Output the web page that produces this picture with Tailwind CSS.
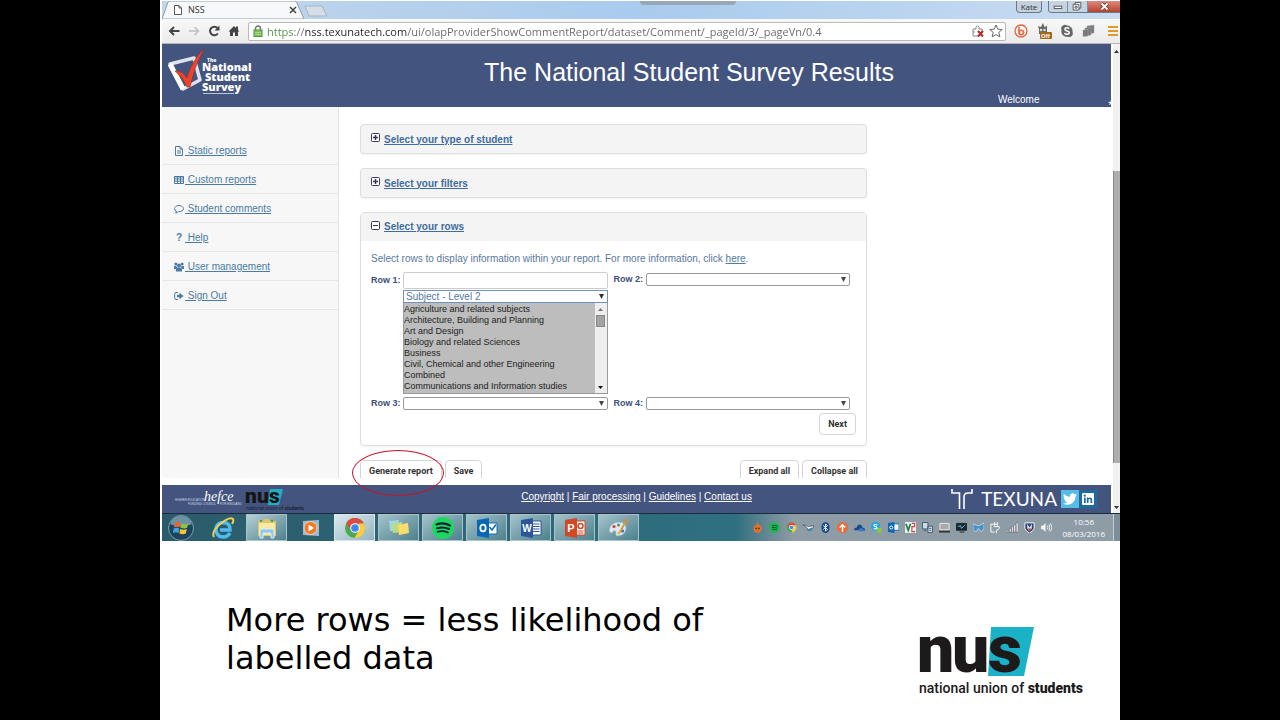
<!DOCTYPE html>
<html lang="en">
<head>
    <meta charset="UTF-8">
    <meta name="viewport" content="width=device-width, initial-scale=1.0">
    <title>The National Student Survey Results</title>
    <script src="https://cdn.jsdelivr.net/npm/@tailwindcss/browser@4"></script>
</head>
<body class="bg-black font-['Liberation_Sans',Arial,sans-serif] text-[10px] leading-3">

<!-- Slide -->
<main class="mx-auto flex min-h-screen w-3/4 flex-col bg-white pt-px">

    <!-- Browser window -->
    <section class="ml-0.5">

        <!-- Tab strip -->
        <div class="flex h-[18px] items-start justify-between bg-linear-to-r from-[#c3d6ea] via-[#a9cbee] to-[#c9dcf0] font-['Open_Sans',sans-serif]">
            <div class="flex h-full">
                <div class="relative flex h-full w-[142px] items-center gap-1.5 pl-3">
                    <svg class="absolute inset-0 h-full w-full" viewBox="0 0 142 18" preserveAspectRatio="none"><path d="M0 18 L6 1 Q7 0 9 0 H132 Q134 0 135 2 L142 18Z" fill="#f7f8f9" stroke="#8b9db2"/></svg>
                    <svg class="relative h-2.5 w-2" viewBox="0 0 8 10" fill="#fff" stroke="#555"><path d="M.5 .5H5L7.5 3V9.500H.5ZM5 .5V3H7.500"/></svg>
                    <span class="relative flex-1 text-[9px] text-[#333]">NSS</span>
                    <button class="relative mr-1.5 h-2.5 w-2.5" aria-label="Close tab"><svg viewBox="0 0 10 10" stroke="#444" stroke-width="1.500"><path d="M2 2L8 8M8 2L2 8"/></svg></button>
                </div>
                <button class="mt-1 h-3 w-6" aria-label="New tab"><svg viewBox="0 0 24 12"><path d="M1 1H18L23 11H5Z" fill="#d5dde6" stroke="#a5b5c6"/></svg></button>
            </div>
            <div class="mr-[280px] ml-auto hidden h-1 w-24 rounded-b bg-[#8c8f91]/60 lg:block"></div>
            <div class="flex shrink-0 gap-1.5">
                <button class="h-3 w-[26px] rounded-b border border-t-0 border-[#66798d] bg-[#c5d0dc] text-[8px] leading-2 text-[#333]">Kate</button>
                <div class="flex h-3 overflow-hidden rounded-bl border border-t-0 border-r-0 border-[#66798d]">
                    <button class="w-[19px] border-r border-[#7b8da1] bg-[#c5d3e2]" aria-label="Minimise"><svg viewBox="0 0 19 11"><rect x="5.500" y="5.500" width="8" height="2.500" fill="#fff" stroke="#555"/></svg></button>
                    <button class="w-5 border-r border-[#7b8da1] bg-[#c5d3e2]" aria-label="Restore"><svg viewBox="0 0 20 11" fill="#fff" stroke="#555"><path d="M7.500 1.500H13.500V7.500H7.500Z"/><path d="M5.500 3.500H11.500V9.500H5.500Z"/><path d="M7.500 5.500H9.500V7.500H7.500Z"/></svg></button>
                    <button class="w-8 bg-linear-to-b from-[#d98a80] to-[#b8402c]" aria-label="Close"><svg viewBox="0 0 32 11"><path d="M13.500 2.500L19.500 8.500M19.500 2.500L13.500 8.500" stroke="#6b3028" stroke-width="3.500"/><path d="M13.500 2.500L19.500 8.500M19.500 2.500L13.500 8.500" stroke="#fff" stroke-width="2"/></svg></button>
                </div>
            </div>
        </div>

        <!-- Toolbar -->
        <div class="flex h-[25px] items-center gap-2 border-b border-[#b5b5b5] bg-linear-to-b from-[#f8f8f8] to-[#ebebeb] pr-0.5 pl-1.5">
            <button class="w-3" aria-label="Back"><svg viewBox="0 0 12 12" fill="none" stroke="#444" stroke-width="2"><path d="M11.500 6H2M6 2L2 6L6 10"/></svg></button>
            <button class="w-3" aria-label="Forward"><svg viewBox="0 0 12 12" fill="none" stroke="#c0c0c0" stroke-width="1.500"><path d="M1 6H10.500M6.500 2L10.500 6L6.500 10"/></svg></button>
            <button class="w-3" aria-label="Reload"><svg viewBox="0 0 12 12"><path d="M9.800 8.500A4.300 4.300 0 1 1 9.500 3" fill="none" stroke="#444" stroke-width="2"/><path d="M11.500 .5V5.500H6.500Z" fill="#444"/></svg></button>
            <button class="w-3" aria-label="Home"><svg viewBox="0 0 12 12" fill="#444"><path d="M6 1L8 3V1.500H10V5L11.500 6.500H10V11H7V7.500H5V11H2V6.500H.5Z"/></svg></button>
            <div class="flex h-[19px] min-w-0 flex-1 items-center gap-1 rounded-xs border border-[#b9b9b9] bg-white pr-0.5 pl-1">
                <svg class="h-3 w-2.5 shrink-0" viewBox="0 0 10 12"><path d="M2.500 6V3.500A2.500 2.500 0 0 1 7.500 3.500V6" fill="none" stroke="#777" stroke-width="1.500"/><rect x="1" y="5" width="8" height="6.500" fill="#7cc05a" stroke="#55953a"/><path d="M2 7.500H8M2 9.500H8" stroke="#a8da8e"/></svg>
                <input type="text" aria-label="Address" value="https://nss.texunatech.com/ui/olapProviderShowCommentReport/dataset/Comment/_pageId/3/_pageVn/0.4" class="h-4 min-w-0 flex-1 bg-[linear-gradient(90deg,#4c9141_27px,#707070_27px,#707070_38px,#222_38px,#222_140px,#666_140px)] bg-clip-text font-['Open_Sans',sans-serif] text-[11px] text-transparent outline-none">
                <svg class="h-3.5 w-3.5 shrink-0" viewBox="0 0 14 14"><path d="M2 5H5V3.500A1.500 1.500 0 0 1 8 3.500V5H11V8M2 5V12H8M2 8H4" fill="none" stroke="#888"/><path d="M7 7L12 12.500M12 7L7 12.500" stroke="#b32c2c" stroke-width="2"/></svg>
                <svg class="h-3.5 w-3.5 shrink-0" viewBox="0 0 14 14"><path d="M7 1L8.800 5.200L13.200 5.500L9.800 8.400L10.900 12.900L7 10.500L3.100 12.900L4.200 8.400L.8 5.500L5.200 5.200Z" fill="#fff" stroke="#666"/></svg>
            </div>
            <button class="w-3.5" aria-label="Bitly"><svg viewBox="0 0 14 14" fill="none" stroke="#e0683c"><circle cx="7" cy="7" r="6" stroke-width="1.300"/><path d="M5 3V9.500" stroke-width="1.500"/><circle cx="7.300" cy="8.500" r="2.200" stroke-width="1.500"/></svg></button>
            <button class="w-4" aria-label="Extension off"><svg viewBox="0 0 16 16"><path d="M3 6L2 3L5 4L7 0L8.500 4L11 3L11 7V11H3Z" fill="#666"/><circle cx="5" cy="7" r="1.300" fill="#ddd"/><circle cx="8.500" cy="7" r="1.300" fill="#ddd"/><rect x="4" y="9" width="12" height="7" rx="1" fill="#a5671c"/><text x="5" y="14.500" font-size="6" font-weight="bold" fill="#fff">Off</text></svg></button>
            <button class="w-3.5" aria-label="Skype"><svg viewBox="0 0 14 14"><path d="M4 1A3.500 3.500 0 0 1 7 1.500A5.500 5.500 0 0 1 12.500 8A3.500 3.500 0 0 1 8 12.700A5.500 5.500 0 0 1 1.500 6A3.500 3.500 0 0 1 4 1Z" fill="#666"/><path d="M9.300 4.800Q8.500 3.800 7 3.800Q4.900 3.800 4.900 5.300Q4.900 6.600 7 7Q9.300 7.400 9.300 8.700Q9.300 10.200 7 10.200Q5.300 10.200 4.500 9" fill="none" stroke="#fff" stroke-width="1.400"/></svg></button>
            <button class="w-3.5" aria-label="Windows"><svg viewBox="0 0 14 14" fill="#777" stroke="#aaa" stroke-width=".5"><path d="M5 2L12 1V9L5 10Z"/><path d="M3 4L9 3.500V11L3 12Z"/><path d="M1 6L6 5.500V12L1 12.500Z"/></svg></button>
            <button class="ml-1 w-2.5" aria-label="Menu"><svg viewBox="0 0 10 12" stroke="#e09a2b" stroke-width="2"><path d="M0 2H10M0 6H10M0 10H10"/></svg></button>
        </div>

        <!-- Web page and its scrollbar -->
        <div class="flex">
            <div class="min-w-0 flex-1">
                <header class="flex h-[63px] overflow-hidden bg-[#43547f] text-white">
                    <svg class="h-[63px] w-[130px]" viewBox="0 0 130 63" role="img" aria-label="The National Student Survey">
                        <path d="M8 20L32 14L38 36L21 45Z" fill="none" stroke="#dfe3ec" stroke-width="3.500" stroke-linejoin="round"/>
                        <path d="M8 20L21 45" stroke="#fff" stroke-width="5"/>
                        <path d="M13 27Q20 26 25 34Q30 16 42 5Q32 23 28 43L25 43Q21 33 13 27Z" fill="#e8452f" stroke="#b7271d" stroke-width=".6"/>
                        <g fill="#fff" font-family="Open Sans" font-weight="800" font-size="11">
                            <text x="45" y="18" font-size="5">The</text>
                            <text x="40" y="27">National</text>
                            <text x="43" y="37">Student</text>
                            <text x="40" y="47">Survey</text>
                        </g>
                        <path d="M41 49.500H72" stroke="#bcc5da"/>
                    </svg>
                    <h1 class="mr-[104px] ml-auto pt-3.5 text-[25px] leading-7">The National Student Survey Results</h1>
                    <div class="flex w-[113px] items-end justify-between pb-px"><span>Welcome</span><span class="w-[3px] overflow-hidden">⁎</span></div>
                </header>

                <div class="flex text-[#58779f]">
                    <!-- Sidebar -->
                    <nav class="w-[177px] shrink-0 border-r border-[#e3e3e3] bg-[#f7f7f7] pt-[29px] text-[#4b7aa3] *:flex *:h-[29px] *:items-center *:gap-px *:border-b *:border-[#e6e6e6] *:pt-px *:pl-3">
                        <a href="#"><svg class="h-2.5 w-2.5" viewBox="0 0 10 10" fill="none" stroke="currentColor"><path d="M1.500 .5H6L8.500 3V9.500H1.500ZM6 .5V3H8.500M3 5H7M3 7H7"/></svg><span class="underline">&nbsp;Static reports</span></a>
                        <a href="#"><svg class="h-2.5 w-2.5" viewBox="0 0 10 10" fill="none" stroke="currentColor"><path d="M.5 1.500H9.500V8.500H.5ZM.5 2H9.500M.5 4H9.500M.5 6.200H9.500M3.500 1V8.500M6.500 1V8.500"/></svg><span class="underline">&nbsp;Custom reports</span></a>
                        <a href="#"><svg class="h-2.5 w-2.5" viewBox="0 0 10 10" fill="none" stroke="currentColor"><path d="M5 1.500C7.500 1.500 9.500 2.800 9.500 4.700C9.500 6.700 7.200 7.900 4.500 7.600Q3.200 9 1.500 9Q2.500 8 2.300 7Q.5 6.200 .5 4.700C.5 2.800 2.500 1.500 5 1.500Z"/></svg><span class="underline">&nbsp;Student comments</span></a>
                        <a href="#"><b class="w-2.5 text-center">?</b><span class="underline">&nbsp;Help</span></a>
                        <a href="#"><svg class="h-2.5 w-2.5" viewBox="0 0 10 10" fill="currentColor"><circle cx="1.900" cy="2" r="1.500"/><circle cx="8.100" cy="2" r="1.500"/><circle cx="5" cy="3.500" r="2"/><path d="M0 4H2.500L3 6L2 7H0ZM10 4H7.500L7 6L8 7H10ZM2 9.500Q1.500 5.500 3.500 5.500H6.500Q8.500 5.500 8 9.500Z"/></svg><span class="underline">&nbsp;User management</span></a>
                        <a href="#"><svg class="h-2.5 w-2.5" viewBox="0 0 10 10"><path d="M4 1.500H2Q.7 1.500 .7 3V7Q.7 8.500 2 8.500H4" fill="none" stroke="currentColor"/><path d="M3 3.700H5.500V1.700L9.500 5L5.500 8.300V6.300H3Z" fill="currentColor"/></svg><span class="underline">&nbsp;Sign Out</span></a>
                    </nav>

                    <!-- Report options -->
                    <div class="min-w-0 flex-1 pt-[17px] pl-[21px]">
                        <div class="flex max-w-[507px] flex-col gap-3.5">
                            <section class="rounded-sm border border-[#dedede] bg-[#f4f4f4] shadow-xs">
                                <h2 class="flex h-7 items-center gap-1 px-2.5 pt-px font-bold text-[#3f6c9c]">
                                    <svg class="mb-1 h-[9px] w-[9px]" viewBox="0 0 9 9" fill="#fff" stroke="#3c3558"><rect x=".5" y=".5" width="8" height="8" rx="1"/><path d="M2 4.500H7M4.500 2V7" stroke-width="1.500"/></svg>
                                    <a href="#" class="underline">Select your type of student</a>
                                </h2>
                            </section>
                            <section class="rounded-sm border border-[#dedede] bg-[#f4f4f4] shadow-xs">
                                <h2 class="flex h-7 items-center gap-1 px-2.5 pt-px font-bold text-[#3f6c9c]">
                                    <svg class="mb-1 h-[9px] w-[9px]" viewBox="0 0 9 9" fill="#fff" stroke="#3c3558"><rect x=".5" y=".5" width="8" height="8" rx="1"/><path d="M2 4.500H7M4.500 2V7" stroke-width="1.500"/></svg>
                                    <a href="#" class="underline">Select your filters</a>
                                </h2>
                            </section>
                            <section class="rounded-sm border border-[#dedede] shadow-xs">
                                <h2 class="flex h-7 items-center gap-1 bg-[#f4f4f4] px-2.5 font-bold text-[#3f6c9c]">
                                    <svg class="mb-1 h-[9px] w-[9px]" viewBox="0 0 9 9" fill="#fff" stroke="#3c3558"><rect x=".5" y=".5" width="8" height="8" rx="1"/><path d="M2 4.500H7"/></svg>
                                    <a href="#" class="underline">Select your rows</a>
                                </h2>
                                <div class="px-2.5 pt-3 pb-2.5">
                                    <p>Select rows to display information within your report. For more information, click <a href="#" class="text-[#4b7aa3] underline">here</a>.</p>
                                    <div class="mt-[7px] mr-1.5 grid grid-cols-2 gap-x-1.5 gap-y-[3px] whitespace-nowrap">
                                        <div class="flex items-start">
                                            <label for="row1" class="w-8 shrink-0 pt-0.5 text-[9px] font-bold text-[#3d4f78]">Row 1:</label>
                                            <div class="min-w-0 flex-1">
                                                <input id="row1" type="text" class="mb-px block h-[17px] w-full rounded-xs border border-[#cccccc] bg-white px-1">
                                                <div class="relative">
                                                    <select aria-label="Row 1 dimension" class="block h-[13px] w-full appearance-none border border-[#6f93bd] bg-white pl-0.5 leading-[11px] text-[#58779f]"><option>Subject - Level 2</option></select>
                                                    <svg class="pointer-events-none absolute top-1 right-1 h-[5px] w-[5px]" viewBox="0 0 5 5"><path d="M0 0H5L2.500 5Z" fill="#333"/></svg>
                                                </div>
                                                <div class="flex h-[91px] border border-t-0 border-[#9a9a9a] bg-[#bdbdbd]">
                                                    <select aria-label="Subjects" multiple size="8" class="min-w-0 flex-1 overflow-hidden bg-transparent pt-px text-[9px] text-[#222] [scrollbar-width:none] *:h-[11px] *:p-0 *:leading-[11px]">
                                                        <option>Agriculture and related subjects</option>
                                                        <option>Architecture, Building and Planning</option>
                                                        <option>Art and Design</option>
                                                        <option>Biology and related Sciences</option>
                                                        <option>Business</option>
                                                        <option>Civil, Chemical and other Engineering</option>
                                                        <option>Combined</option>
                                                        <option>Communications and Information studies</option>
                                                    </select>
                                                    <div class="flex w-3 flex-col items-center bg-[#eeeeee] py-1">
                                                        <svg class="mt-px h-[3px] w-[5px]" viewBox="0 0 5 3"><path d="M0 3H5L2.500 0Z" fill="#777"/></svg>
                                                        <div class="mt-1 h-3 w-[9px] border border-[#888] bg-[#a3a3a3]"></div>
                                                        <svg class="mt-auto h-[3px] w-[5px]" viewBox="0 0 5 3"><path d="M0 0H5L2.500 3Z" fill="#111"/></svg>
                                                    </div>
                                                </div>
                                            </div>
                                        </div>
                                        <div class="flex items-start pt-px">
                                            <label for="row2" class="w-8 shrink-0 text-[9px] font-bold text-[#3d4f78]">Row 2:</label>
                                            <div class="relative min-w-0 flex-1">
                                                <select id="row2" class="block h-[13px] w-full appearance-none rounded-xs border border-[#999] bg-white"><option></option></select>
                                                <svg class="pointer-events-none absolute top-1 right-1 h-[5px] w-[5px]" viewBox="0 0 5 5"><path d="M0 0H5L2.500 5Z" fill="#444"/></svg>
                                            </div>
                                        </div>
                                        <div class="flex items-start">
                                            <label for="row3" class="w-8 shrink-0 text-[9px] font-bold text-[#3d4f78]">Row 3:</label>
                                            <div class="relative min-w-0 flex-1">
                                                <select id="row3" class="block h-[13px] w-full appearance-none rounded-xs border border-[#999] bg-white"><option></option></select>
                                                <svg class="pointer-events-none absolute top-1 right-1 h-[5px] w-[5px]" viewBox="0 0 5 5"><path d="M0 0H5L2.500 5Z" fill="#444"/></svg>
                                            </div>
                                        </div>
                                        <div class="flex items-start">
                                            <label for="row4" class="w-8 shrink-0 text-[9px] font-bold text-[#3d4f78]">Row 4:</label>
                                            <div class="relative min-w-0 flex-1">
                                                <select id="row4" class="block h-[13px] w-full appearance-none rounded-xs border border-[#999] bg-white"><option></option></select>
                                                <svg class="pointer-events-none absolute top-1 right-1 h-[5px] w-[5px]" viewBox="0 0 5 5"><path d="M0 0H5L2.500 5Z" fill="#444"/></svg>
                                            </div>
                                        </div>
                                    </div>
                                    <div class="mt-[3px] flex justify-end">
                                        <button class="h-[22px] rounded-sm border border-[#d5d5d5] bg-white px-2 font-['Roboto',sans-serif] text-[9px] font-bold text-[#333]">Next</button>
                                    </div>
                                </div>
                            </section>

                            <div class="relative">
                                <div class="flex h-[18px] gap-[3px] overflow-hidden font-['Roboto',sans-serif] *:h-[22px] *:shrink-0 *:rounded-sm *:border *:border-[#d5d5d5] *:bg-white *:px-2 *:text-[9px] *:font-bold *:text-[#333]">
                                    <button>Generate report</button>
                                    <button>Save</button>
                                    <button class="ml-auto">Expand all</button>
                                    <button>Collapse all</button>
                                </div>
                                <div class="pointer-events-none absolute -top-2.5 -left-2 z-10 h-[46px] w-[92px] rounded-[50%] border border-[#c3152a]"></div>
                            </div>
                        </div>
                    </div>
                </div>

                <!-- Page footer -->
                <footer class="mt-[7px] flex h-7 items-center justify-between bg-[#43547f] text-white">
                    <svg class="h-7 w-[154px]" viewBox="0 0 154 28" role="img" aria-label="hefce, nus">
                        <g fill="#fff">
                            <text x="42" y="16" font-family="Liberation Serif" font-style="italic" font-size="14">hefce</text>
                            <g font-size="3" fill="#d2d8e6"><text x="13" y="16">HIGHER EDUCATION</text><text x="26" y="20">FUNDING COUNCIL</text><text x="58" y="20">FOR ENGLAND</text></g>
                        </g>
                        <path d="M108 4H121L117 20H106Z" fill="#1fb0c5"/>
                        <g font-family="Roboto" font-weight="900" font-size="21" fill="#151515"><text x="83" y="18">n</text><text x="95" y="18">u</text><text x="107" y="18">s</text></g>
                        <text x="84" y="25" font-family="Roboto" font-size="5" fill="#1b2238">national union of <tspan font-weight="bold">students</tspan></text>
                    </svg>
                    <p class="mb-1 ml-1.5"><a href="#" class="underline">Copyright</a> | <a href="#" class="underline">Fair processing</a> | <a href="#" class="underline">Guidelines</a> | <a href="#" class="underline">Contact us</a></p>
                    <div class="mr-3.5 flex items-center">
                        <svg class="h-5 w-[22px]" viewBox="0 0 22 20" fill="none" stroke="#fff" stroke-width="1.600"><path d="M1 0V4H8.500V20M21 0V4H17Q13 4 13 8V20"/></svg>
                        <span class="ml-2 font-['Lato',sans-serif] text-[19px] leading-5">TEXUNA</span>
                        <a href="#" aria-label="Twitter" class="ml-1 flex h-[18px] w-[18px] items-center justify-center bg-[#55bde8]"><svg class="h-3.5 w-3.5" viewBox="0 0 24 24" fill="#fff"><path d="M24 4.600a10 10 0 0 1-2.800.8 5 5 0 0 0 2.200-2.700c-1 .6-2 1-3.100 1.200a4.900 4.900 0 0 0-8.400 4.500C7.700 8.100 4.100 6.100 1.700 3.100a4.900 4.900 0 0 0 1.500 6.600c-.8 0-1.600-.3-2.200-.6a4.900 4.900 0 0 0 3.900 4.900 5 5 0 0 1-2.200.1 4.900 4.900 0 0 0 4.600 3.400A9.900 9.900 0 0 1 0 19.500a14 14 0 0 0 7.500 2.200c9.100 0 14.300-7.700 14-14.600A10 10 0 0 0 24 4.600z"/></svg></a>
                        <a href="#" aria-label="LinkedIn" class="flex h-[18px] w-[18px] items-center justify-center bg-[#1f6c9c]"><svg class="h-3 w-3" viewBox="0 0 12 12"><rect width="12" height="12" rx="1" fill="#fff"/><g fill="#1f6c9c"><circle cx="2.800" cy="2.700" r="1.100"/><path d="M2 4.500H3.700V10H2ZM4.800 4.500H6.400V5.300Q7 4.300 8.200 4.400Q10.200 4.500 10.200 7V10H8.500V7.200Q8.500 6 7.500 6Q6.500 6 6.500 7.300V10H4.800Z"/></g></svg></a>
                    </div>
                </footer>
            </div>

            <!-- Vertical scrollbar -->
            <div class="ml-0.5 flex w-[7px] flex-col items-center bg-[#f1f1f1] pt-1.5 pb-1">
                <svg class="h-[3px] w-[5px]" viewBox="0 0 5 3"><path d="M0 3H5L2.500 0Z" fill="#333"/></svg>
                <div class="mt-[118px] h-[292px] w-full border-l border-[#888] bg-[#adadad]"></div>
                <svg class="mt-auto h-[3px] w-[5px]" viewBox="0 0 5 3"><path d="M0 0H5L2.500 3Z" fill="#333"/></svg>
            </div>
        </div>

        <!-- Windows taskbar -->
        <div class="flex h-7 border-t border-[#1c2c3f] bg-linear-to-r from-[#2b5b6b] from-0% via-[#2f7080] via-60% to-[#8e9ca6] to-66%">
            <div class="flex gap-[3px] *:flex *:w-[41px] *:items-center *:justify-center">
                <button class="max-w-[37px]" aria-label="Start">
                    <svg class="h-[26px] w-[26px]" viewBox="0 0 26 26"><circle cx="13" cy="13" r="12.500" fill="#1d4560" stroke="#7d9cab"/><path d="M2 9A11.500 11.500 0 0 1 24 9Q13 14 2 9Z" fill="#6c92a5"/><path d="M7 8Q10 6 12.500 8L11.500 12.500Q9 11 6 12.500Z" fill="#f0642c"/><path d="M13.500 8.500Q16.500 10 20 8.500L19 13Q16 14 12.500 12.800Z" fill="#8cc63f"/><path d="M5.800 13.500Q8.500 12 11.300 13.500L10.500 18Q7.500 16.500 4.800 18Z" fill="#3fa4e6"/><path d="M12.300 14Q15.500 15.500 18.800 14L17.800 18.500Q14.500 20 11.300 18.300Z" fill="#fbc52e"/></svg>
                </button>
                <button aria-label="Internet Explorer">
                    <svg class="h-6 w-6" viewBox="0 0 24 24" fill="none"><path d="M19 17Q16.500 21 12 21Q5 20.500 5 13.500Q5.500 6.500 12.500 6.500Q19.500 7 19 14H9" stroke="#4dbdf0" stroke-width="3.500"/><path d="M3 21Q0 16 9 8Q19 0 22 3Q23 5 21 8" stroke="#f3ce51" stroke-width="2"/></svg>
                </button>
                <button class="border border-[#a9c3cb] bg-linear-to-br from-[#b8d0d6] to-[#4c818e]" aria-label="File Explorer">
                    <svg class="h-6 w-6" viewBox="0 0 24 24"><path d="M3 5H8L9 3H14L15 5H21V20H3Z" fill="#e2c565"/><path d="M4 7H20V19H4Z" fill="#f8e9a4"/><path d="M5 4H7V6H5ZM16 4H18V6H16Z" fill="#5a9b58"/><path d="M5 22V15Q5 13 7 13H17Q19 13 19 15V22H16V17H8V22Z" fill="#8fc7ea" stroke="#d6edf8"/></svg>
                </button>
                <button aria-label="Media Player">
                    <svg class="h-[18px] w-[18px]" viewBox="0 0 18 18"><path d="M1 2L17 1V17L1 16Z" fill="#9dbbcf"/><circle cx="8.500" cy="9" r="6.500" fill="#f0782a" stroke="#f9d3a8"/><path d="M6.500 5.500L12 9L6.500 12.500Z" fill="#fff"/></svg>
                </button>
                <button class="border border-[#d9e7eb] bg-linear-to-br from-[#dbe9ee] to-[#92b4bf]" aria-label="Chrome">
                    <svg class="h-[22px] w-[22px]" viewBox="0 0 22 22"><circle cx="11" cy="11" r="10" fill="#4aaa51"/><path d="M2.300 6A10 10 0 0 1 20 6.500H11L7 13Z" fill="#df4a3c"/><path d="M20 6.500A10 10 0 0 1 10.500 21L15 13V6.500Z" fill="#fccc3c"/><circle cx="11" cy="11" r="4.800" fill="#fff"/><circle cx="11" cy="11" r="3.800" fill="#4285f4"/></svg>
                </button>
                <button class="border border-[#a9c3cb] bg-linear-to-br from-[#a4c3ca] to-[#4c818e]" aria-label="Sticky Notes">
                    <svg class="h-[22px] w-[22px]" viewBox="0 0 22 22"><path d="M1 4L11 3L9 14L2 14Z" fill="#9ed5e5"/><path d="M4 7L14 5L15 15L5 16Z" fill="#b9dc83"/><path d="M10 8L20 6L21 16L11 18Z" fill="#f8dd6c"/></svg>
                </button>
                <button class="border border-[#a9c3cb] bg-linear-to-br from-[#a4c3ca] to-[#4c818e]" aria-label="Spotify">
                    <svg class="h-[22px] w-[22px]" viewBox="0 0 22 22" fill="none" stroke="#123" stroke-linecap="round"><circle cx="11" cy="11" r="11" fill="#1ed760" stroke="none"/><path d="M4.500 7.500Q11.500 5 18 8.500" stroke-width="2.200"/><path d="M5 11.200Q11.500 9.300 17 12" stroke-width="2"/><path d="M5.500 14.700Q11 13.200 16 15.500" stroke-width="1.700"/></svg>
                </button>
                <button class="border border-[#a9c3cb] bg-linear-to-br from-[#a4c3ca] to-[#4c818e]" aria-label="Outlook">
                    <svg class="h-[22px] w-[22px]" viewBox="0 0 22 22"><path d="M12 6H21V17H12Z" fill="#fff" stroke="#0f6cbd"/><path d="M13.500 10L16 13L20 7.500" fill="none" stroke="#0f6cbd" stroke-width="1.500"/><path d="M1 3L13 1V21L1 19Z" fill="#0868b5"/><ellipse cx="7" cy="11" rx="2.700" ry="3.300" fill="none" stroke="#fff" stroke-width="1.800"/></svg>
                </button>
                <button class="border border-[#a9c3cb] bg-linear-to-br from-[#a4c3ca] to-[#4c818e]" aria-label="Word">
                    <svg class="h-[22px] w-[22px]" viewBox="0 0 22 22"><path d="M12 4H21V18H12Z" fill="#fff" stroke="#2b579a"/><path d="M13 7H19.500M13 9.500H19.500M13 12H19.500M13 14.500H19.500" stroke="#2b579a"/><path d="M1 3L13 1V21L1 19Z" fill="#2b579a"/><text x="7" y="15" text-anchor="middle" font-size="10" font-weight="bold" fill="#fff">W</text></svg>
                </button>
                <button class="border border-[#a9c3cb] bg-linear-to-br from-[#a4c3ca] to-[#4c818e]" aria-label="PowerPoint">
                    <svg class="h-[22px] w-[22px]" viewBox="0 0 22 22"><path d="M12 4H21V18H12Z" fill="#fff" stroke="#d24726"/><path d="M13.500 14H19.500M13.500 16H19.500" stroke="#d24726"/><circle cx="16.500" cy="9" r="2.500" fill="none" stroke="#d24726" stroke-width="1.500"/><path d="M1 3L13 1V21L1 19Z" fill="#d24726"/><text x="7" y="15" text-anchor="middle" font-size="11" font-weight="bold" fill="#fff">P</text></svg>
                </button>
                <button class="border border-[#a9c3cb] bg-linear-to-br from-[#a4c3ca] to-[#4c818e]" aria-label="Paint">
                    <svg class="h-[22px] w-[22px]" viewBox="0 0 22 22"><path d="M1 13Q2 6 10 5Q19 5 18 12Q17 19 9 19Q7 18 8 15Q6 12 4 16Q1 16 1 13Z" fill="#dce9f2" stroke="#8aa8b9" stroke-width=".6"/><circle cx="6" cy="9.500" r="1.600" fill="#d24141"/><circle cx="10.500" cy="8" r="1.500" fill="#4b9b49"/><circle cx="14.500" cy="14" r="1.700" fill="#3c75c8"/><circle cx="11" cy="16" r="1.500" fill="#e9bb31"/><path d="M12 15L18 4" stroke="#e1973c" stroke-width="2"/><path d="M17 6L18 1L21 1L20 6Z" fill="#bd9262"/></svg>
                </button>
            </div>

            <!-- Notification area -->
            <div class="ml-auto flex items-center font-['Open_Sans',sans-serif] text-[8px] text-white">
                <div class="flex *:mx-[3px] *:h-[11px] *:w-[11px]">
                    <svg viewBox="0 0 12 12"><path d="M6 0Q7 3 10 5Q12 11 6 12Q0 11 2 5Q5 4 6 0Z" fill="#e8702a"/><circle cx="4.500" cy="7" r="1" fill="#532"/><circle cx="7.500" cy="7" r="1" fill="#532"/></svg>
                    <svg viewBox="0 0 12 12"><circle cx="6" cy="6" r="6" fill="#1fb954"/><path d="M3 4Q6 3 9.500 4.500M3 6.200Q6 5.300 9 6.700M3.500 8.200Q6 7.500 8.500 8.700" fill="none" stroke="#143"/></svg>
                    <svg viewBox="0 0 22 22"><circle cx="11" cy="11" r="10" fill="#4aaa51"/><path d="M2.300 6A10 10 0 0 1 20 6.500H11L7 13Z" fill="#df4a3c"/><path d="M20 6.500A10 10 0 0 1 10.500 21L15 13V6.500Z" fill="#fccc3c"/><circle cx="11" cy="11" r="4.800" fill="#fff"/><circle cx="11" cy="11" r="3.600" fill="#4285f4"/></svg>
                    <svg viewBox="0 0 12 12"><path d="M0 3L6 5L12 4L9 9L5 9L5 7Z" fill="#f5f5f5" stroke="#345" stroke-width=".7"/><path d="M5 8L10 6V8L7 10Z" fill="#3b81b9"/></svg>
                    <svg viewBox="0 0 12 12"><ellipse cx="6" cy="6" rx="4.500" ry="6" fill="#174b8f"/><path d="M3.500 3.800L8 8L6 10V2L8 4L3.500 8.200" fill="none" stroke="#fff"/></svg>
                    <svg viewBox="0 0 12 12"><circle cx="6" cy="6" r="6" fill="#ec6a35"/><path d="M6 11V3M3 6L6 3L9 6" fill="none" stroke="#fff" stroke-width="1.600"/></svg>
                    <svg viewBox="0 0 12 12"><path d="M0 9Q0 6 3 6Q4 2 7 3Q9 3 9 6Q12 6 12 9Z" fill="#164a8b"/><path d="M4 10Q4 7 7 7Q9 6 10 8Q12 8 12 10Z" fill="#3f7cc3"/></svg>
                    <svg viewBox="0 0 12 12"><circle cx="5" cy="5" r="5" fill="#22a7e0"/><circle cx="9" cy="9" r="3" fill="#8ac44a"/><path d="M7 3.200Q3 2 3.200 4Q3.500 5 5 5Q7 5.500 6.500 7Q5 8 3 7" fill="none" stroke="#fff" stroke-width="1.200"/></svg>
                    <svg viewBox="0 0 12 12"><path d="M6 2H12V9H6Z" fill="#fff" stroke="#0868b5"/><path d="M0 1L7 0V12L0 11Z" fill="#0868b5"/><circle cx="3.500" cy="6" r="1.700" fill="none" stroke="#fff"/></svg>
                    <svg viewBox="0 0 12 12"><rect width="12" height="12" fill="#eee"/><path d="M1 2L3.500 9L6 2" fill="none" stroke="#168045" stroke-width="1.800"/><path d="M7.500 1.500H10.500V5H7.500V10.500H11" fill="none" stroke="#c44" stroke-width="1.200"/></svg>
                    <svg viewBox="0 0 12 12" fill="#c8dce6" stroke="#456"><path d="M.5 .5H6.500V7.500H.5ZM6.500 4.500H11.500V11.500H6.500ZM2 9.500H5M8 7H10M8 9H10"/></svg>
                    <svg viewBox="0 0 12 12"><path d="M1 1.500H11V8.500H1Z" fill="#aaa" stroke="#eee"/><path d="M0 9.500H12V11.500H0Z" fill="#333"/></svg>
                    <svg viewBox="0 0 12 12"><path d="M.5 1.500H11.500V9H.5ZM4 11H9" fill="#12283c" stroke="#222"/><path d="M2 5L5 4L6 7L10 3" fill="none" stroke="#7cc1c2"/></svg>
                    <svg viewBox="0 0 12 12"><path d="M0 2L5 4L7 4L12 1V7L9 11L6 7L3 11L0 8Z" fill="#4a93c9" stroke="#dcebf5" stroke-width=".7"/></svg>
                    <svg viewBox="0 0 12 12" fill="none" stroke="#fff"><path d="M1 2.500H8M1 2V11H5M5 0V4M8 0V4M4 5H10V7Q9 9 7 9V12"/></svg>
                    <svg viewBox="0 0 12 12" fill="#f2f2f2" stroke="#556" stroke-width=".5"><path d="M0 9H2V11H0ZM2.500 7H4.500V11H2.500ZM5 5H7V11H5ZM7.500 3H9.500V11H7.500ZM10 1H12V11H10Z"/></svg>
                    <svg viewBox="0 0 12 12"><path d="M1 1H11V7Q10 10 6 12Q2 10 1 7Z" fill="#26437a" stroke="#fff"/><path d="M3.500 2V7L6 10L8.500 7V2L6 6Z" fill="#e9e3e3"/><path d="M4 7H8L6 10Z" fill="#d23a35"/></svg>
                    <svg viewBox="0 0 12 12"><path d="M0 4H2L5 1V11L2 8H0Z" fill="#f2f2f2"/><path d="M7 4Q8 6 7 8M8.700 2.500Q10.500 6 8.700 9.500M10.500 1.500Q13 6 10.500 10.500" fill="none" stroke="#f2f2f2"/></svg>
                </div>
                <div class="px-2 text-center">10:56<br>08/03/2016</div>
                <div class="h-full w-[7px] border-l border-[#c5ced5] bg-[#7e8d9a]"></div>
            </div>
        </div>
    </section>

    <!-- Slide text -->
    <section class="flex flex-1 items-start justify-between pr-[26px] pl-[66px]">
        <p class="max-w-[500px] pt-[60px] font-['DejaVu_Sans',Verdana,sans-serif] text-[32px] leading-[38px] text-black">More rows = less likelihood of labelled data</p>
        <svg class="mt-[86px] h-[70px] w-[180px] shrink-0" viewBox="0 0 180 70" role="img" aria-label="national union of students">
            <path d="M77 0H120L110 49H74Z" fill="#1bb1c7"/>
            <g font-family="Roboto" font-weight="900" font-size="66" fill="#1c1a1b"><text x="3" y="45">n</text><text x="38" y="45">u</text><text x="74" y="45">s</text></g>
            <text x="5" y="66" font-family="Roboto" font-size="14" font-weight="500" fill="#1c1a1b">national union of <tspan font-weight="900">students</tspan></text>
        </svg>
    </section>
</main>

</body>
</html>
